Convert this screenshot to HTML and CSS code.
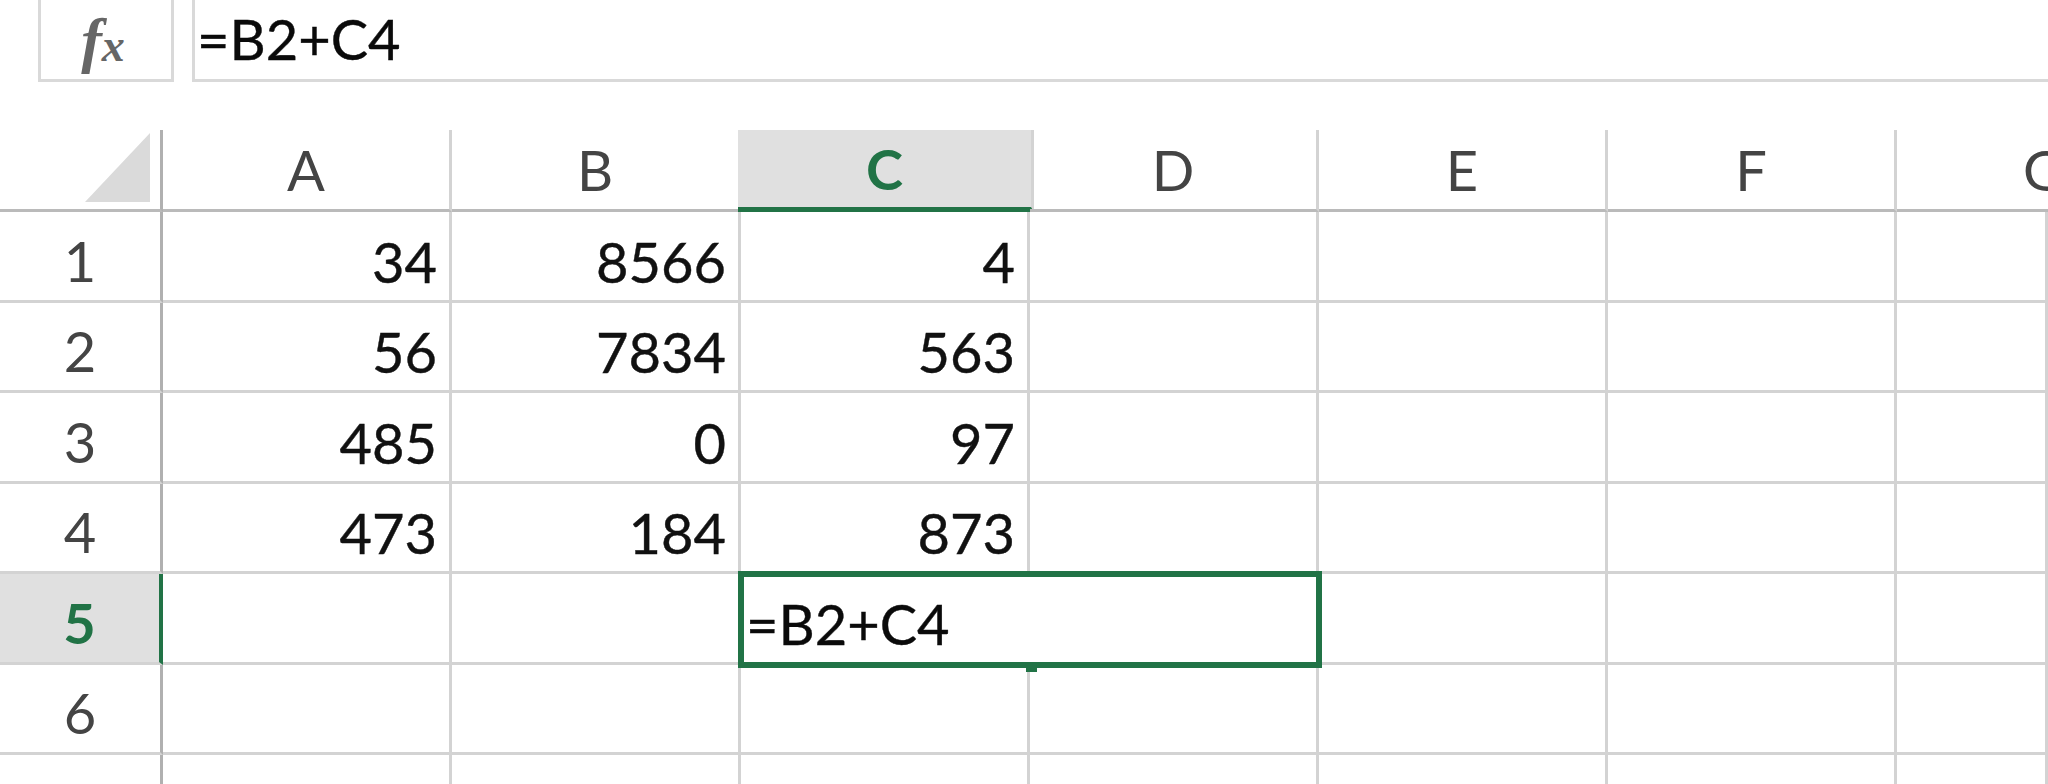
FILE: index.html
```html
<!DOCTYPE html>
<html lang="en">
<head>
    <meta charset="UTF-8">
    <title>Sheet1</title>
    <link rel="stylesheet" href="styles.css">
</head>
<body>
<div class="window">
<div class="formula-bar">
    <div class="fx-box"><span class="fx-f">f</span><span class="fx-x">x</span></div>
    <div class="formula-input">=B2+C4</div>
</div>

<div class="sheet">
    <!-- column headers -->
    <div class="corner"><div class="select-all"></div></div>
    <div class="col-head">A</div>
    <div class="col-head">B</div>
    <div class="col-head active">C</div>
    <div class="col-head">D</div>
    <div class="col-head">E</div>
    <div class="col-head">F</div>
    <div class="col-head last">G</div>

    <div class="row-head">1</div>
    <div class="cell">34</div>
    <div class="cell">8566</div>
    <div class="cell">4</div>
    <div class="cell"></div>
    <div class="cell"></div>
    <div class="cell"></div>
    <div class="cell"></div>

    <div class="row-head">2</div>
    <div class="cell">56</div>
    <div class="cell">7834</div>
    <div class="cell">563</div>
    <div class="cell"></div>
    <div class="cell"></div>
    <div class="cell"></div>
    <div class="cell"></div>

    <div class="row-head">3</div>
    <div class="cell">485</div>
    <div class="cell">0</div>
    <div class="cell">97</div>
    <div class="cell"></div>
    <div class="cell"></div>
    <div class="cell"></div>
    <div class="cell"></div>

    <div class="row-head">4</div>
    <div class="cell">473</div>
    <div class="cell">184</div>
    <div class="cell">873</div>
    <div class="cell"></div>
    <div class="cell"></div>
    <div class="cell"></div>
    <div class="cell"></div>

    <div class="row-head active">5</div>
    <div class="cell"></div>
    <div class="cell"></div>
    <div class="cell editing">=B2+C4<span class="fill-handle"></span></div>
    <div class="cell"></div>
    <div class="cell"></div>
    <div class="cell"></div>

    <div class="row-head">6</div>
    <div class="cell"></div>
    <div class="cell"></div>
    <div class="cell"></div>
    <div class="cell"></div>
    <div class="cell"></div>
    <div class="cell"></div>
    <div class="cell"></div>

    <!-- row 7, only its top edge is in view -->
    <div class="row-head"></div>
    <div class="cell"></div>
    <div class="cell"></div>
    <div class="cell"></div>
    <div class="cell"></div>
    <div class="cell"></div>
    <div class="cell"></div>
    <div class="cell"></div>
</div>
</div>
</body>
</html>
```

FILE: styles.css
```css
html, body{
    margin: 0;
    padding: 0;
    background-color: #ffffff;
}
body{
    font-family: Lato, 'Open Sans', 'Liberation Sans', sans-serif;
    color: #111111;
}
.window{
    width: 2048px;
    height: 784px;
    overflow: hidden;
}

/* formula bar */
.formula-bar{
    display: flex;
    height: 82px;
    margin-left: 38px;
    gap: 18px;
}
.fx-box{
    box-sizing: border-box;
    width: 136px;
    border: 3px solid #d9d9d9;
    border-top: none;
    display: flex;
    align-items: center;
    justify-content: center;
    padding-right: 6px;
    color: #666666;
    font-family: 'Liberation Serif', 'DejaVu Serif', serif;
    font-style: italic;
    font-weight: bold;
}
.fx-f{
    font-size: 62px;
    line-height: 1;
}
.fx-x{
    font-size: 46px;
    line-height: 1;
    margin-top: 12px;
}
.formula-input{
    box-sizing: border-box;
    flex: 1;
    border-left: 3px solid #d9d9d9;
    border-bottom: 3px solid #d9d9d9;
    display: flex;
    align-items: flex-end;
    padding: 0 0 12px 2px;
    font-size: 56px;
    line-height: 1;
    color: #0a0a0a;
    -webkit-text-stroke: 0.4px #0a0a0a;
}

/* grid */
.sheet{
    margin-top: 48px;
    display: grid;
    width: 2048px;
    grid-template-columns: 163px repeat(6, 289px) 151px;
    grid-template-rows: 82px;
    grid-auto-rows: 90.5px;
    font-size: 56px;
    line-height: 1;
}
.sheet > div{
    box-sizing: border-box;
    border-right: 3px solid #d3d3d3;
    border-bottom: 3px solid #d3d3d3;
}
.corner{
    display: flex;
    justify-content: flex-end;
    align-items: flex-end;
    padding: 0 10px 7px 0;
    border-right-color: #b0b0b0 !important;
    border-bottom-color: #bababa !important;
}
.select-all{
    width: 65px;
    height: 69px;
    background-color: #dadada;
    clip-path: polygon(100% 0, 100% 100%, 0 100%);
}
.col-head{
    display: flex;
    align-items: center;
    justify-content: center;
    color: #444444;
    border-bottom-color: #bababa !important;
}
.col-head.last{
    justify-content: flex-start;
    padding-left: 126px;
    border-right: none !important;
}
.col-head.active{
    background-color: #e0e0e0;
    color: #217346;
    font-weight: bold;
    border-bottom: 5px solid #217346 !important;
    margin-left: -3px;
    margin-right: -4px;
}
.row-head{
    display: flex;
    align-items: flex-end;
    justify-content: center;
    padding-bottom: 11px;
    color: #444444;
    border-right-color: #b0b0b0 !important;
}
.row-head.active{
    background-color: #e0e0e0;
    color: #217346;
    font-weight: bold;
    border-right: 4px solid #217346 !important;
}
.cell{
    display: flex;
    align-items: flex-end;
    justify-content: flex-end;
    padding: 0 12px 10px 0;
    -webkit-text-stroke: 0.4px #111111;
}
.cell.editing{
    grid-column: span 2;
    justify-content: flex-start;
    padding-left: 5px;
    position: relative;
    z-index: 1;
    outline: 6px solid #217346;
    outline-offset: -3px;
    color: #0a0a0a;
}
.fill-handle{
    position: absolute;
    left: 285px;
    bottom: -10px;
    width: 11px;
    height: 10px;
    background-color: #217346;
}
```
